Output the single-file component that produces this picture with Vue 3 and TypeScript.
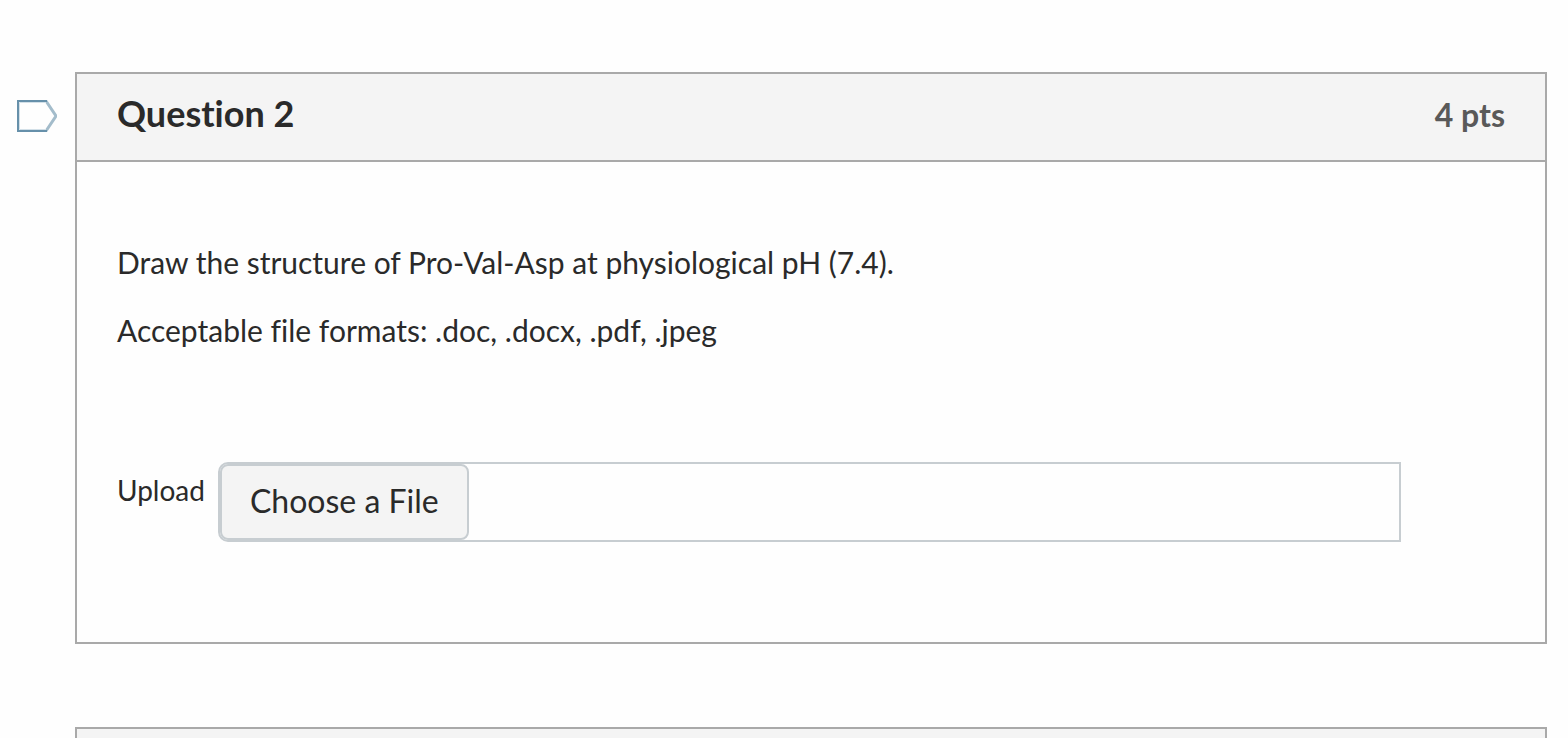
<script setup lang="ts">
import { ref } from 'vue'

interface Question {
  title: string
  points: number
  prompt: string[]
}

const question: Question = {
  title: 'Question 2',
  points: 4,
  prompt: [
    'Draw the structure of Pro-Val-Asp at physiological pH (7.4).',
    'Acceptable file formats: .doc, .docx, .pdf, .jpeg',
  ],
}

const flagged = ref(false)
const fileName = ref('')
const picker = ref<HTMLInputElement | null>(null)

function openPicker(): void {
  picker.value?.click()
}

function onPick(event: Event): void {
  const input = event.target as HTMLInputElement
  fileName.value = input.files?.[0]?.name ?? ''
}
</script>

<template>
  <main class="quiz">
    <div class="row">
      <button
        class="flag"
        :class="{ active: flagged }"
        type="button"
        aria-label="Flag question"
        :aria-pressed="flagged"
        @click="flagged = !flagged"
      >
        <svg width="40" height="32" viewBox="0 0 40 32" aria-hidden="true">
          <path class="slant" d="M29 1 L39 16 L29 31" />
          <path class="inner" d="M2.5 29.5 V2.5 H29 M2.5 29.5 H29" />
          <path class="edge" d="M30 1 H1 V31 H30" />
        </svg>
      </button>

      <section class="card">
        <header class="head">
          <h2 class="title">{{ question.title }}</h2>
          <span class="points">{{ question.points }} pts</span>
        </header>
        <div class="body">
          <p v-for="line in question.prompt" :key="line" class="line">{{ line }}</p>
          <div class="upload">
            <label class="label" for="choose">Upload</label>
            <div class="field">
              <button id="choose" class="choose" type="button" @click="openPicker">Choose a File</button>
              <span class="name">{{ fileName }}</span>
              <input ref="picker" type="file" accept=".doc,.docx,.pdf,.jpeg" hidden @change="onPick" />
            </div>
          </div>
        </div>
      </section>
    </div>

    <div class="row">
      <section class="card">
        <header class="head"></header>
      </section>
    </div>
  </main>
</template>

<style>
body {
  margin: 0;
  background: #fefefe;
}
</style>

<style scoped>
.quiz {
  box-sizing: border-box;
  height: 100vh;
  overflow: hidden;
  padding: 72px 21px 0 17px;
  display: flex;
  flex-direction: column;
  gap: 83px;
  color: #2a2a2a;
  font-family: Lato, "Open Sans", sans-serif;
  font-variant-ligatures: none;
}

.row {
  display: grid;
  grid-template-columns: 40px minmax(0, 1fr);
  column-gap: 18px;
  align-items: start;
}

.flag {
  margin: 28px 0 0;
  padding: 0;
  border: 0;
  background: none;
  cursor: pointer;
}

.flag svg {
  display: block;
  fill: none;
}

.flag.active svg {
  fill: #f8c558;
}

.edge {
  stroke: #6690aa;
  stroke-width: 2;
}

.inner {
  stroke: #d3e0e8;
  stroke-width: 1;
}

.slant {
  stroke: #a3bccb;
  stroke-width: 3;
}

.card {
  grid-column: 2;
  border: 2px solid #a9a9a9;
}

.head {
  box-sizing: border-box;
  min-height: 88px;
  padding: 0 40px;
  display: flex;
  align-items: center;
  justify-content: space-between;
  background: #f4f4f4;
  border-bottom: 2px solid #a9a9a9;
}

.title {
  margin: 0;
  padding-bottom: 8px;
  font-size: 36px;
  line-height: 40px;
  font-weight: 700;
}

.points {
  padding-bottom: 4px;
  font-size: 32px;
  line-height: 40px;
  font-weight: 700;
  color: #595959;
}

.body {
  padding: 78px 40px 100px;
}

.line {
  margin: 0 0 24px;
  font-size: 30px;
  line-height: 44px;
}

.upload {
  margin-top: 110px;
  display: flex;
  align-items: flex-start;
  gap: 13px;
  padding-right: 104px;
}

.label {
  padding-top: 10px;
  font-size: 28px;
  line-height: 36px;
}

.field {
  box-sizing: border-box;
  flex: 1;
  min-width: 0;
  height: 80px;
  display: flex;
  align-items: stretch;
  border: 2px solid #c7cdd1;
  border-radius: 10px 0 0 10px;
}

.choose {
  padding: 0 28px 2px;
  border: 2px solid #c7cdd1;
  border-radius: 8px;
  background: #f4f4f4;
  color: #2a2a2a;
  font-family: inherit;
  font-variant-ligatures: inherit;
  font-size: 32px;
  line-height: 40px;
  cursor: pointer;
}

.name {
  padding: 0 16px;
  align-self: center;
  font-size: 28px;
}
</style>
